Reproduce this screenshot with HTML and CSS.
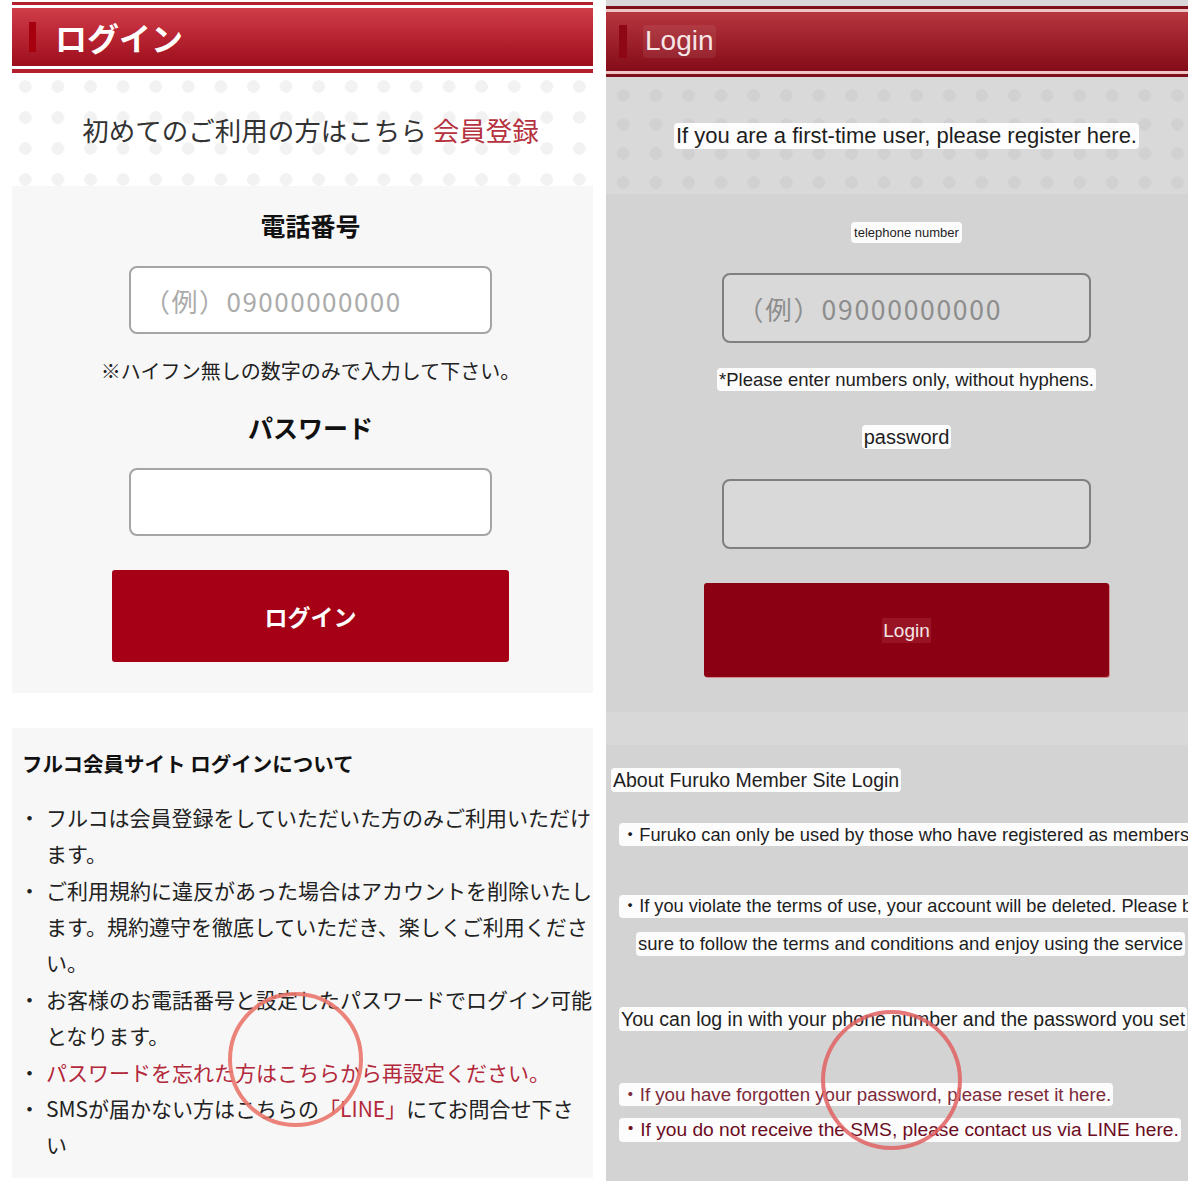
FILE: index.html
```html
<!DOCTYPE html>
<html lang="ja">
<head>
<meta charset="utf-8">
<title>ログイン</title>
<link rel="stylesheet" href="styles.css">
</head>
<body>
<div class="page">
  <section class="panel panel-ja">
    <header class="head head-ja">
      <div class="head-bar">
        <span class="accent"></span>
        <h1 class="head-title">ログイン</h1>
      </div>
    </header>
    <div class="hero hero-ja">
      <p class="hero-text">初めてのご利用の方はこちら <a class="link">会員登録</a></p>
    </div>
    <div class="form form-ja">
      <label class="label">電話番号</label>
      <input class="field" type="tel" placeholder="（例）09000000000">
      <p class="note">※ハイフン無しの数字のみで入力して下さい。</p>
      <label class="label label-gap">パスワード</label>
      <input class="field field-gap" type="password">
      <button class="btn" type="button">ログイン</button>
    </div>
    <div class="info info-ja">
      <h2 class="info-title">フルコ会員サイト ログインについて</h2>
      <ul class="info-list">
        <li class="item"><span class="bullet">・</span><span class="item-text">フルコは会員登録をしていただいた方のみご利用いただけ<br>ます。</span></li>
        <li class="item"><span class="bullet">・</span><span class="item-text">ご利用規約に違反があった場合はアカウントを削除いたし<br>ます。規約遵守を徹底していただき、楽しくご利用くださ<br>い。</span></li>
        <li class="item"><span class="bullet">・</span><span class="item-text">お客様のお電話番号と設定したパスワードでログイン可能<br>となります。</span></li>
        <li class="item"><span class="bullet">・</span><span class="item-text item-red">パスワードを忘れた方はこちらから再設定ください。</span></li>
        <li class="item"><span class="bullet">・</span><span class="item-text">SMSが届かない方はこちらの<span class="item-red">「LINE」</span>にてお問合せ下さ<br>い</span></li>
      </ul>
    </div>
    <span class="ring ring-ja"></span>
  </section>

  <section class="panel panel-en">
    <header class="head head-en">
      <div class="head-bar">
        <span class="accent"></span>
        <h1 class="head-title"><span class="head-tag">Login</span></h1>
      </div>
    </header>
    <div class="hero hero-en">
      <span class="tag tag-hero">If you are a first-time user, please register here.</span>
    </div>
    <div class="form form-en">
      <span class="tag tag-tel">telephone number</span>
      <input class="field field-en" type="tel" placeholder="（例）09000000000">
      <span class="tag tag-note">*Please enter numbers only, without hyphens.</span>
      <span class="tag tag-pw">password</span>
      <input class="field field-en field-en-gap" type="password">
      <button class="btn btn-en" type="button"><span class="btn-tag">Login</span></button>
    </div>
    <div class="info info-en">
      <div class="row row-title"><span class="tag tag-title">About Furuko Member Site Login</span></div>
      <div class="row row-1"><span class="tag tag-item tag-s18">・Furuko can only be used by those who have registered as members</span></div>
      <div class="row row-2"><span class="tag tag-item tag-s182">・If you violate the terms of use, your account will be deleted. Please be</span></div>
      <div class="row row-2b"><span class="tag tag-item tag-lh24">sure to follow the terms and conditions and enjoy using the service</span></div>
      <div class="row row-3"><span class="tag tag-item tag-s195">You can log in with your phone number and the password you set</span></div>
      <div class="row row-4"><span class="tag tag-item tag-red1">・If you have forgotten your password, please reset it here.</span></div>
      <div class="row row-5"><span class="tag tag-item tag-red2">・If you do not receive the SMS, please contact us via LINE here.</span></div>
    </div>
    <span class="ring ring-en"></span>
  </section>
</div>
</body>
</html>
```

FILE: styles.css
```css
* {
  box-sizing: border-box;
  margin: 0;
  padding: 0;
}

html,
body {
  background: #ffffff;
}

body {
  width: 1200px;
  height: 1181px;
  overflow: hidden;
  font-family: "Noto Sans CJK JP", sans-serif;
  color: #222;
}

.page {
  display: flex;
  gap: 13px;
  padding: 0 12px;
  height: 1181px;
}

.panel {
  position: relative;
  overflow: hidden;
  display: flex;
  flex-direction: column;
  flex: none;
}

.panel-ja {
  width: 581px;
}

.panel-en {
  width: 582px;
  background: #d8d8d8;
  font-family: "Liberation Sans", "Noto Sans CJK JP", sans-serif;
}

/* ---------- header ---------- */
.head {
  flex: none;
  padding: 3px 0;
}

.head-ja {
  margin-top: 2px;
  border-top: 3px solid #b31f2d;
  border-bottom: 4px solid #b31f2d;
  background: #ffffff;
}

.head-en {
  margin-top: 6px;
  border-top: 3px solid #7e101b;
  border-bottom: 3px solid #7e101b;
  background: #efc4c4;
}

.head-bar {
  display: flex;
  align-items: center;
}

.head-ja .head-bar {
  height: 58px;
  padding-left: 17px;
  background: linear-gradient(#d03e4a 0%, #bb2634 45%, #9d0e1d 100%);
}

.head-en .head-bar {
  height: 59px;
  padding-left: 13px;
  background: linear-gradient(#b7363f 0%, #a0222d 45%, #850c19 100%);
}

.accent {
  display: block;
  flex: none;
}

.head-ja .accent {
  width: 7px;
  height: 30px;
  background: #a6000f;
}

.head-en .accent {
  width: 8px;
  height: 33px;
  background: #8e0714;
}

.head-title {
  color: #ffffff;
  line-height: 1;
}

.head-ja .head-title {
  margin-left: 19px;
  font-size: 32px;
  font-weight: 700;
}

.head-en .head-title {
  margin-left: 16px;
  font-size: 28px;
  font-weight: 400;
}

.head-tag {
  display: block;
  padding: 2px 2px 3px;
  line-height: 28px;
  border-radius: 4px;
  color: #f7e6e6;
  background: rgba(255, 255, 255, 0.07);
}

/* ---------- hero with dots ---------- */
.hero {
  flex: none;
  display: flex;
  align-items: center;
  justify-content: center;
}

.hero-ja {
  height: 113px;
  padding-left: 16px;
  background-color: #ffffff;
  background-image: radial-gradient(circle, #f2f2f2 6px, rgba(242, 242, 242, 0) 6.5px);
  background-size: 32.6px 31px;
  background-position: -3px -2px;
}

.hero-en {
  height: 117px;
  padding-left: 19px;
  background-color: #d9d9d9;
  background-image: radial-gradient(circle, #d1d1d1 6px, rgba(209, 209, 209, 0) 6.5px);
  background-size: 32.6px 29px;
  background-position: 1px 4px;
}

.hero-text {
  font-size: 26.5px;
  line-height: 36px;
  color: #333333;
}

.link {
  color: #b5323f;
  text-decoration: none;
}

/* ---------- form ---------- */
.form {
  flex: none;
  display: flex;
  flex-direction: column;
  align-items: center;
}

.form-ja {
  padding: 22px 0 31px 16px;
  background: #f7f7f7;
}

.form-en {
  padding: 28px 0 35px 19px;
  background: #d3d3d3;
}

.label {
  font-size: 25px;
  font-weight: 700;
  line-height: 34px;
  color: #111111;
}

.label-gap {
  margin-top: 24px;
}

.field {
  display: block;
  margin-top: 24px;
  width: 363px;
  height: 68px;
  border: 2px solid #a5a5a5;
  border-radius: 8px;
  background: #ffffff;
  padding-left: 13px;
  font-family: "Noto Sans CJK JP", sans-serif;
  font-size: 26px;
  letter-spacing: 1.5px;
  color: #333;
  outline: none;
}

.field::placeholder {
  color: #ababab;
}

.note {
  margin-top: 22px;
  font-size: 20px;
  line-height: 30px;
  color: #222222;
}

.btn {
  display: block;
  margin-top: 34px;
  width: 397px;
  height: 92px;
  border: none;
  border-radius: 3px;
  background: #a50016;
  color: #ffffff;
  font-family: "Noto Sans CJK JP", sans-serif;
  font-size: 23px;
  font-weight: 700;
}

/* english form */
.tag {
  display: block;
  flex: none;
  white-space: nowrap;
  padding: 0 2px;
  border-radius: 4px;
  background: rgba(255, 255, 255, 0.93);
  color: #1e1e1e;
}

.tag-hero {
  font-size: 22px;
  line-height: 26px;
}

.tag-tel {
  font-size: 13px;
  line-height: 21px;
  padding: 0 3px;
}

.field-en {
  margin-top: 30px;
  width: 369px;
  height: 70px;
  border-color: #7f7f7f;
  background: #d9d9d9;
  font-size: 26.5px;
  letter-spacing: 1.7px;
}

.field-en::placeholder {
  color: #8d8d8d;
}

.field-en-gap {
  margin-top: 30px;
}

.tag-note {
  margin-top: 25px;
  font-size: 18.5px;
  line-height: 23px;
}

.tag-pw {
  margin-top: 34px;
  font-size: 20px;
  line-height: 24px;
}

.btn-en {
  margin-top: 34px;
  width: 405px;
  height: 94px;
  background: #8b0012;
  box-shadow: 1px 1px 0 rgba(214, 90, 100, 0.6);
  font-family: "Liberation Sans", sans-serif;
  font-weight: 400;
  font-size: 19px;
}

.btn-tag {
  display: inline-block;
  padding: 1px 1px;
  line-height: 23px;
  background: #981424;
  color: #f6e5e5;
}

/* ---------- info (japanese) ---------- */
.info-ja {
  margin-top: 35px;
  height: 450px;
  flex: none;
  padding: 20px 0 0 10px;
  background: #f7f7f7;
}

.info-title {
  font-size: 20.5px;
  font-weight: 700;
  line-height: 30px;
  color: #111111;
}

.info-list {
  list-style: none;
  margin-top: 20.8px;
  font-size: 21px;
  line-height: 36.4px;
  color: #222222;
}

.item {
  display: flex;
}

.bullet {
  flex: none;
  width: 27px;
  margin-left: -3px;
}

.item-text {
  white-space: nowrap;
}

.item-red {
  color: #b3283a;
}

/* ---------- info (english) ---------- */
.info-en {
  margin-top: 33px;
  flex: 1;
  background: #d3d3d3;
}

.row {
  display: flex;
  padding-left: 13px;
}

.row-title {
  margin-top: 23px;
  padding-left: 5px;
}

.tag-title {
  font-size: 19.5px;
  line-height: 24px;
}

.tag-item {
  font-size: 18.5px;
  line-height: 23px;
}

.tag-s18 {
  font-size: 18.3px;
}

.tag-s182 {
  font-size: 18.2px;
}

.tag-s195 {
  font-size: 19.5px;
  line-height: 24px;
}

.tag-lh24 {
  line-height: 24px;
}

.row-1 {
  margin-top: 31px;
}

.row-2 {
  margin-top: 49px;
}

.row-2b {
  margin-top: 14px;
  padding-left: 30px;
}

.row-3 {
  margin-top: 51px;
}

.row-4 {
  margin-top: 52px;
}

.row-5 {
  margin-top: 12px;
}

.tag-red1 {
  font-size: 18.7px;
  color: #7c2a3a;
}

.tag-red2 {
  font-size: 19.2px;
  line-height: 24px;
  color: #6c0c1f;
}

/* ---------- annotation rings ---------- */
.ring {
  position: absolute;
  border-radius: 50%;
  pointer-events: none;
}

.ring-ja {
  left: 216px;
  top: 992px;
  width: 135px;
  height: 135px;
  border: 4.5px solid rgba(233, 118, 108, 0.9);
}

.ring-en {
  left: 215px;
  top: 1010px;
  width: 141px;
  height: 140px;
  border: 4px solid rgba(224, 98, 98, 0.85);
}
```
